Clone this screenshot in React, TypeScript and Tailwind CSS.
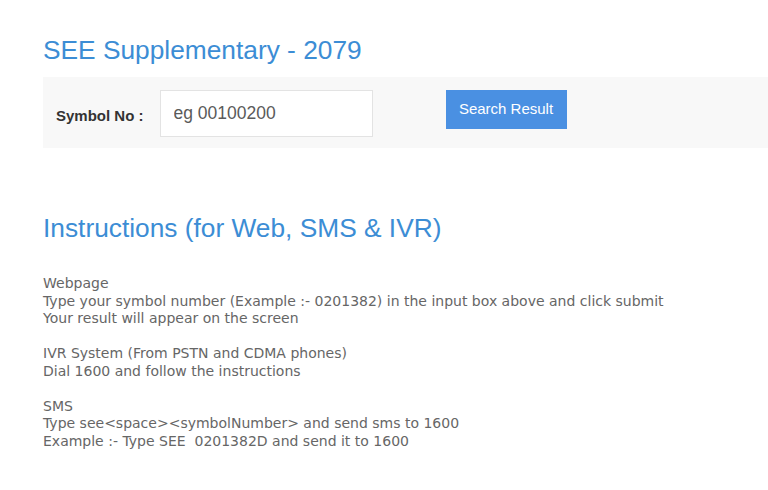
const App = () => {
  return (
    <div className="min-h-screen bg-white pl-[43px] pt-[36px]" style={{ fontFamily: '"Liberation Sans", Arial, sans-serif' }}>
      {/* Search */}
      <h1 className="text-[26.3px] leading-[28px] text-[#3c8dd5]">SEE Supplementary - 2079</h1>
      <div className="mt-[13px] h-[71px] bg-[#f8f8f8] flex items-start pt-[13px]">
        <label className="ml-[13px] mt-[15px] text-[15px] font-bold text-[#333]">Symbol No :</label>
        <input
          type="text"
          placeholder="eg 00100200"
          className="ml-[16px] w-[213px] h-[47px] bg-white border border-[#e3e3e3] px-[13px] text-[17.5px] text-[#555] placeholder:text-[#5a5a5a] outline-none"
        />
        <button className="ml-[73px] w-[121px] h-[39px] bg-[#4a90e2] text-white text-[15px]">Search Result</button>
      </div>

      {/* Instructions */}
      <h2 className="mt-[66px] text-[26.3px] leading-[28px] text-[#3c8dd5]">Instructions (for Web, SMS &amp; IVR)</h2>
      <div
        className="mt-[33px] text-[14px] leading-[17.5px] text-[#666]"
        style={{ fontFamily: '"DejaVu Sans", Verdana, sans-serif' }}
      >
        <p>Webpage</p>
        <p>Type your symbol number (Example :- 0201382) in the input box above and click submit</p>
        <p>Your result will appear on the screen</p>
        <p className="mt-[17.5px]">IVR System (From PSTN and CDMA phones)</p>
        <p>Dial 1600 and follow the instructions</p>
        <p className="mt-[17.5px]">SMS</p>
        <p>Type see&lt;space&gt;&lt;symbolNumber&gt; and send sms to 1600</p>
        <p>Example :- Type SEE&nbsp; 0201382D and send it to 1600</p>
      </div>
    </div>
  )
}

export default App
